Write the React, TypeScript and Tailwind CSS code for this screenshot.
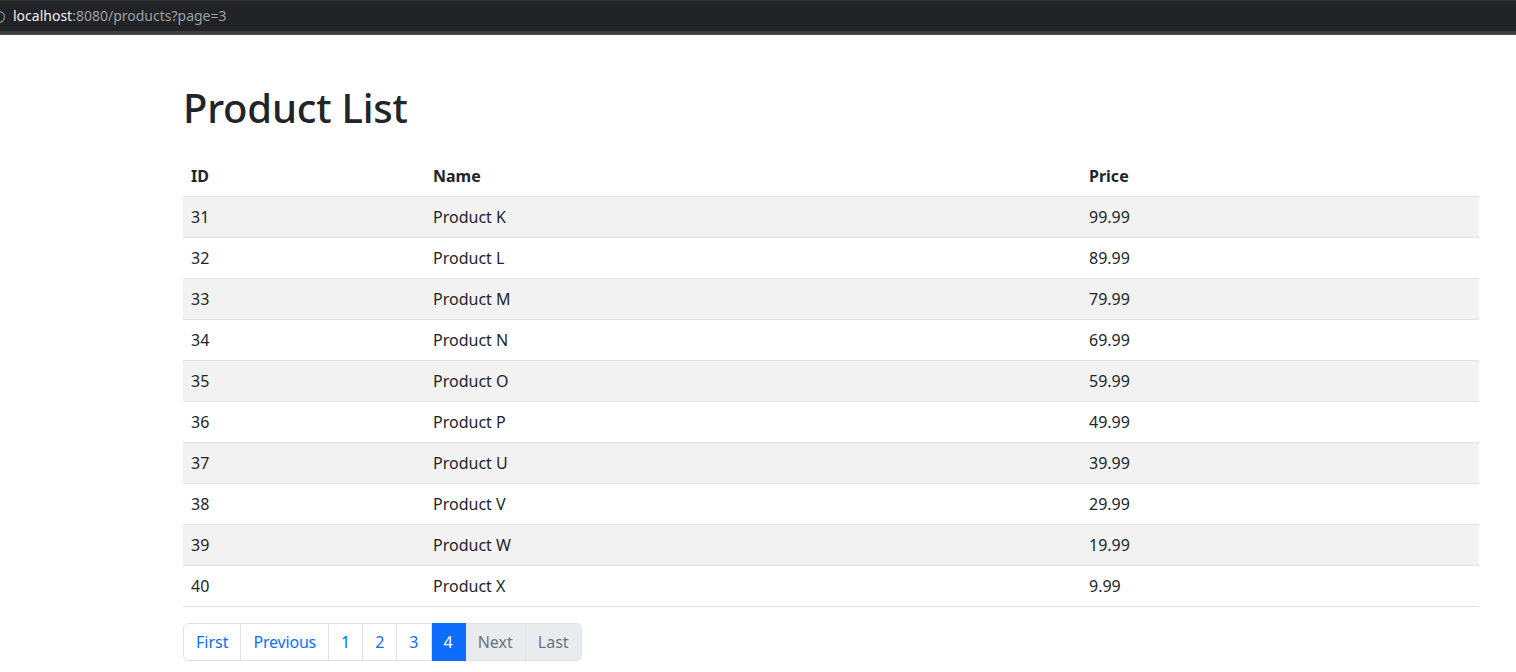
import React from "react";

const rows = [
  ["31", "Product K", "99.99"],
  ["32", "Product L", "89.99"],
  ["33", "Product M", "79.99"],
  ["34", "Product N", "69.99"],
  ["35", "Product O", "59.99"],
  ["36", "Product P", "49.99"],
  ["37", "Product U", "39.99"],
  ["38", "Product V", "29.99"],
  ["39", "Product W", "19.99"],
  ["40", "Product X", "9.99"],
];

export default function App() {
  return (
    <div className="min-h-[672px] bg-white text-[#212529]" style={{ fontFamily: '"Noto Sans", sans-serif' }}>
      {/* browser url bar */}
      <div className="h-[31px] bg-[#222326] border-t border-[#2e2f32] flex items-center relative">
        <svg className="absolute left-0 top-[9px]" width="6" height="14" viewBox="0 0 6 14">
          <circle cx="-1" cy="7" r="5.5" fill="none" stroke="#8a8a8a" strokeWidth="1.3" />
        </svg>
        <div className="ml-[13px] text-[14px] leading-none">
          <span className="text-[#f0f0f0]">localhost</span>
          <span className="text-[#9aa0a6]">:8080/products?page=3</span>
        </div>
      </div>
      <div className="h-[4px] bg-[#3b3c3e] border-b border-[#4d4d4f]" />

      <div className="ml-[183px] w-[1296px] pt-[49px]">
        <h1 className="text-[40px] leading-[48px] font-medium mb-6 text-[#212529] tracking-[-0.2px]">Product List</h1>

        <table className="w-full border-collapse text-[16px] leading-6 mb-4">
          <colgroup>
            <col className="w-[242px]" />
            <col className="w-[656px]" />
            <col />
          </colgroup>
          <thead>
            <tr className="border-b border-[#dee2e6]">
              <th className="text-left font-bold px-2 py-2">ID</th>
              <th className="text-left font-bold px-2 py-2">Name</th>
              <th className="text-left font-bold px-2 py-2">Price</th>
            </tr>
          </thead>
          <tbody>
            {rows.map((r, i) => (
              <tr key={r[0]} className={`border-b border-[#dee2e6] ${i % 2 === 0 ? "bg-[#f2f2f2]" : "bg-white"}`}>
                <td className="px-2 py-2">{r[0]}</td>
                <td className="px-2 py-2">{r[1]}</td>
                <td className="px-2 py-2">{r[2]}</td>
              </tr>
            ))}
          </tbody>
        </table>

        <nav className="flex text-[16px] leading-6">
          <a className="px-3 py-[6px] border border-[#dee2e6] rounded-l-[6px] text-[#0d6efd] bg-white">First</a>
          <a className="px-3 py-[6px] border border-l-0 border-[#dee2e6] text-[#0d6efd] bg-white tracking-[-0.2px]">Previous</a>
          <a className="px-3 py-[6px] border border-l-0 border-[#dee2e6] text-[#0d6efd] bg-white">1</a>
          <a className="px-3 py-[6px] border border-l-0 border-[#dee2e6] text-[#0d6efd] bg-white">2</a>
          <a className="px-3 py-[6px] border border-l-0 border-[#dee2e6] text-[#0d6efd] bg-white">3</a>
          <a className="px-3 py-[6px] border border-l-0 border-[#0d6efd] text-white bg-[#0d6efd]">4</a>
          <span className="px-3 py-[6px] border border-l-0 border-[#dee2e6] text-[#6c757d] bg-[#e9ecef]">Next</span>
          <span className="px-3 py-[6px] border border-l-0 border-[#dee2e6] rounded-r-[6px] text-[#6c757d] bg-[#e9ecef]">Last</span>
        </nav>
      </div>
    </div>
  );
}
